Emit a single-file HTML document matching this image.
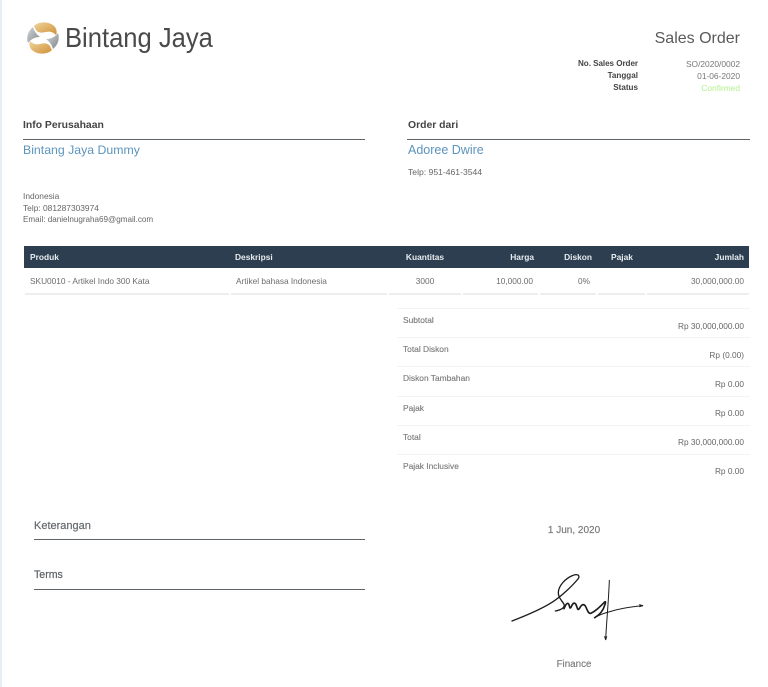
<!DOCTYPE html>
<html><head><meta charset="utf-8"><style>
html,body{margin:0;padding:0;background:#fff}
body{width:768px;height:687px;position:relative;overflow:hidden;font-family:"Liberation Sans",sans-serif;color:#555}
.t{position:absolute;white-space:nowrap;line-height:14px;height:14px}
.r{text-align:right}
.c{text-align:center}
.s{font-size:8.4px;color:#666}
.b{font-weight:bold;color:#444}
.l{position:absolute;height:1px;background:#5f6468}
.g{position:absolute;height:2px;background:#eee;top:293px}
.f{position:absolute;height:1px;background:#f3f3f3;left:397px;width:353px}
.h{font-size:8.4px;font-weight:bold;color:#e8ecef;top:250px}
.tb{font-size:8.300px;color:#6c6c6c;top:274px}
.lab{font-size:8.400px;left:403px;color:#777;-webkit-text-stroke:.12px #777}
.val{font-size:8.300px;color:#666;right:24px}
.wrap{position:absolute;left:0;top:0;width:768px;height:687px;filter:blur(.3px)}
</style></head><body>
<div style="position:absolute;left:0;top:0;width:2px;height:687px;background:#e4f0f8"></div>
<div class="wrap">
<svg style="position:absolute;left:26px;top:21px" width="34" height="34" viewBox="0 0 34 34">
<defs>
<linearGradient id="au" x1="0" y1="0" x2="1" y2="1"><stop offset="0" stop-color="#f0d39c"/><stop offset="1" stop-color="#cf9238"/></linearGradient>
<linearGradient id="ag" x1="0" y1="0" x2="1" y2="1"><stop offset="0" stop-color="#d5d8da"/><stop offset="1" stop-color="#80868a"/></linearGradient>
</defs>
<path d="M8 5C13 0 24 0 29 6C31 9 31 12 30 14C27 11 24 10 20 11C16 12 12 12 10 9Z" fill="url(#au)"/>
<path d="M26 29C21 34 10 34 5 28C3 25 3 22 4 20C7 23 10 24 14 23C18 22 22 22 24 25Z" fill="url(#au)"/>
<path d="M7 6C2 10 0 16 2 22C5 18 9 16 14 16C11 14 8 10 7 6Z" fill="url(#ag)"/>
<path d="M27 28C32 24 34 18 32 12C29 16 25 18 20 18C23 20 26 24 27 28Z" fill="url(#ag)"/>
</svg>
<div class="t" style="left:65px;top:21px;height:34px;line-height:34px;font-size:27.500px;color:#4a4a4a;transform:scaleX(.93);transform-origin:0 0">Bintang Jaya</div>
<div class="t r" style="right:28px;top:29px;height:20px;line-height:20px;font-size:16px;color:#5a5a5a">Sales Order</div>
<div class="t r s b" style="right:130px;top:57px;font-size:8.1px;letter-spacing:-.05px">No. Sales Order</div>
<div class="t r s b" style="right:130px;top:69px;font-size:8.1px">Tanggal</div>
<div class="t r s b" style="right:130px;top:81px;font-size:8.1px">Status</div>
<div class="t r s" style="right:28px;top:57px;color:#777">SO/2020/0002</div>
<div class="t r s" style="right:28px;top:69px;color:#777">01-06-2020</div>
<div class="t r s" style="right:28px;top:81px;color:#b4f08e">Confirmed</div>

<div class="t b" style="left:23px;top:119px;font-size:10.400px">Info Perusahaan</div>
<div class="l" style="left:23px;width:342px;top:139px"></div>
<div class="t" style="left:23px;top:143px;font-size:12.300px;color:#5b94bd">Bintang Jaya Dummy</div>
<div class="t s" style="left:23px;top:189px">Indonesia</div>
<div class="t s" style="left:23px;top:201px">Telp: 081287303974</div>
<div class="t s" style="left:23px;top:213px;font-size:8.1px">Email: danielnugraha69@gmail.com</div>

<div class="t b" style="left:408px;top:119px;font-size:10.400px">Order dari</div>
<div class="l" style="left:407px;width:343px;top:139px"></div>
<div class="t" style="left:408px;top:143px;font-size:12.500px;color:#5b94bd">Adoree Dwire</div>
<div class="t s" style="left:408px;top:165px;font-size:8.600px">Telp: 951-461-3544</div>

<div style="position:absolute;left:24px;top:246px;width:725px;height:22px;background:#2c3e50"></div>
<div class="t h" style="left:30px">Produk</div>
<div class="t h" style="left:235px">Deskripsi</div>
<div class="t h c" style="left:389px;width:72px">Kuantitas</div>
<div class="t h r" style="right:234px">Harga</div>
<div class="t h r" style="right:176px">Diskon</div>
<div class="t h" style="left:611px">Pajak</div>
<div class="t h r" style="right:24px">Jumlah</div>

<div class="t tb" style="left:30px">SKU0010 - Artikel Indo 300 Kata</div>
<div class="t tb" style="left:236px">Artikel bahasa Indonesia</div>
<div class="t tb c" style="left:389px;width:72px">3000</div>
<div class="t tb r" style="right:235px">10,000.00</div>
<div class="t tb r" style="right:178px">0%</div>
<div class="t tb r" style="right:24px">30,000,000.00</div>
<div class="g" style="left:25px;width:204px"></div>
<div class="g" style="left:231px;width:156px"></div>
<div class="g" style="left:389px;width:72px"></div>
<div class="g" style="left:463px;width:75px"></div>
<div class="g" style="left:540px;width:56px"></div>
<div class="g" style="left:598px;width:47px"></div>
<div class="g" style="left:647px;width:102px"></div>

<div class="f" style="top:308px"></div>
<div class="f" style="top:337px"></div>
<div class="f" style="top:366px"></div>
<div class="f" style="top:396px"></div>
<div class="f" style="top:425px"></div>
<div class="f" style="top:454px"></div>
<div class="t lab" style="top:313px">Subtotal</div>
<div class="t val" style="top:319px">Rp 30,000,000.00</div>
<div class="t lab" style="top:342px">Total Diskon</div>
<div class="t val" style="top:348px">Rp (0.00)</div>
<div class="t lab" style="top:371px">Diskon Tambahan</div>
<div class="t val" style="top:377px">Rp 0.00</div>
<div class="t lab" style="top:401px">Pajak</div>
<div class="t val" style="top:406px">Rp 0.00</div>
<div class="t lab" style="top:430px">Total</div>
<div class="t val" style="top:435px">Rp 30,000,000.00</div>
<div class="t lab" style="top:459px">Pajak Inclusive</div>
<div class="t val" style="top:464px">Rp 0.00</div>

<div class="t" style="left:34px;top:519px;font-size:11px;color:#666b70;-webkit-text-stroke:.2px #666b70">Keterangan</div>
<div class="l" style="left:34px;width:331px;top:539px"></div>
<div class="t" style="left:34px;top:568px;font-size:10.600px;color:#5a5f64;-webkit-text-stroke:.2px #5a5f64">Terms</div>
<div class="l" style="left:34px;width:331px;top:589px"></div>

<div class="t c" style="left:514px;width:120px;top:524px;font-size:10px;color:#777;-webkit-text-stroke:.15px #777">1 Jun, 2020</div>
<svg style="position:absolute;left:490px;top:510px" width="170" height="177" viewBox="0 0 510 531">
<g fill="none" stroke="#1c1c1c" stroke-linecap="round" stroke-linejoin="round">
<path stroke-width="4" d="M66 333C105 318 150 300 186 277C216 258 248 226 264 207C272 196 262 190 247 197C224 207 206 228 205 247C204 262 216 272 222 283C226 293 212 300 196 303"/>
<path stroke-width="5" d="M222 296C226 286 231 276 236 282C240 290 238 298 243 292C248 280 252 276 257 282C262 290 262 304 268 296C274 284 280 280 286 288C292 298 294 312 302 310C316 304 328 292 342 278C347 272 348 276 344 286C340 300 330 314 314 323"/>
<path stroke-width="3" d="M314 323C326 316 340 310 356 306C384 297 418 291 458 287"/>
<path stroke-width="3" d="M358 211C356 270 350 330 347 388"/>
<path stroke-width="3" d="M344 380l3 9l3-9M449 284l9 3l-9 3"/>
</g></svg>
<div class="t c" style="left:514px;width:120px;top:658px;font-size:9.800px;color:#777;-webkit-text-stroke:.12px #777">Finance</div>
</div>
</body></html>
